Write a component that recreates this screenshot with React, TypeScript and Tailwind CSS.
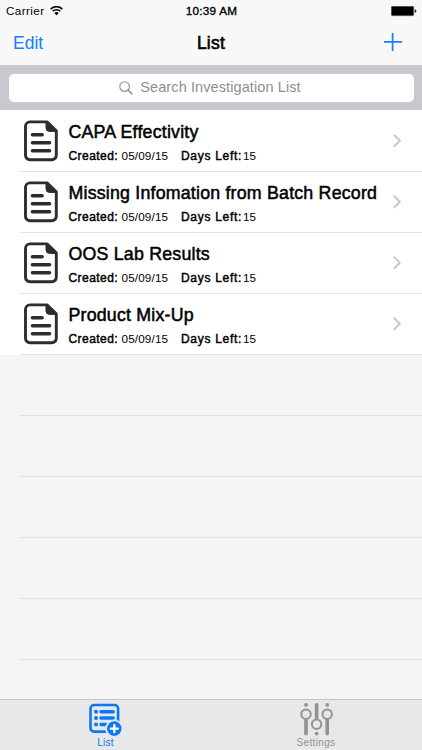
interface Investigation {
  title: string;
  created: string;
  daysLeft: number;
}

const investigations: Investigation[] = [
  { title: "CAPA Effectivity", created: "05/09/15", daysLeft: 15 },
  { title: "Missing Infomation from Batch Record", created: "05/09/15", daysLeft: 15 },
  { title: "OOS Lab Results", created: "05/09/15", daysLeft: 15 },
  { title: "Product Mix-Up", created: "05/09/15", daysLeft: 15 },
];

function WifiIcon() {
  return (
    <svg width="13" height="10" viewBox="0 0 13 10" fill="none" stroke="#000" strokeWidth="1.6">
      <path d="M0.7 3.1a8.2 8.2 0 0 1 11.6 0" />
      <path d="M2.7 5.3a5.4 5.4 0 0 1 7.6 0" />
      <path d="M6.5 9.3L4.3 7a3.1 3.1 0 0 1 4.4 0z" fill="#000" stroke="none" />
    </svg>
  );
}

function BatteryIcon() {
  return (
    <svg width="26" height="11" viewBox="0 0 26 11">
      <rect x="0.25" y="0.25" width="22.5" height="9.5" rx="1.2" fill="#000" stroke="#777" strokeWidth="0.5" />
      <path d="M23.7 3.4h0.6a0.9 0.9 0 0 1 0.9 0.9v1.4a0.9 0.9 0 0 1-0.9 0.9h-0.6z" fill="#222" />
    </svg>
  );
}

function DocumentIcon() {
  return (
    <svg className="shrink-0" width="34" height="42" viewBox="0 0 34 42" fill="none" stroke="#2d2d30">
      <path d="M6 1.9H23L32.3 10.9V35.2a4.5 4.5 0 0 1-4.5 4.5H6a4.5 4.5 0 0 1-4.5-4.5V6.4A4.5 4.5 0 0 1 6 1.9z" strokeWidth="2.9" strokeLinejoin="round" />
      <path d="M22 1.9v6a3.5 3.5 0 0 0 3.5 3.5h7.1z" fill="#2d2d30" strokeWidth="1" />
      <path d="M8.4 14.8h9.8M8.4 22.8h17.2M8.4 30.8h17.2" strokeWidth="3.4" strokeLinecap="round" />
    </svg>
  );
}

function ListTabIcon() {
  return (
    <svg width="34" height="34" viewBox="0 0 34 34" fill="none" stroke="#0b79f6">
      <rect x="1.5" y="2" width="27.6" height="26.6" rx="3.6" strokeWidth="2.6" />
      <path d="M12 8.8h12.2M12 15.1h12.2M12 21.4h5.6" strokeWidth="3.5" strokeLinecap="round" />
      <path d="M7 8.8h0M7 15.1h0M7 21.4h0" strokeWidth="4" strokeLinecap="round" />
      <circle cx="25.3" cy="25.6" r="8.2" fill="#0b79f6" stroke="#e8e8e8" strokeWidth="1.8" />
      <path d="M25.3 22.1v7M21.8 25.6h7" stroke="#fff" strokeWidth="2.4" strokeLinecap="round" />
    </svg>
  );
}

function SettingsTabIcon() {
  return (
    <svg width="34" height="34" viewBox="0 0 34 34" fill="none" stroke="#929292" strokeWidth="3.6" strokeLinecap="round">
      <circle cx="6" cy="11.3" r="4.7" strokeWidth="2" />
      <circle cx="16.6" cy="21.3" r="4.7" strokeWidth="2" />
      <circle cx="27.2" cy="11.3" r="4.7" strokeWidth="2" />
      <path d="M6 17.5v13.2M16.6 1.9v13.2M27.2 17.5v13.2" />
      <path d="M6 1.9h0M16.6 30.6h0M27.2 1.9h0" strokeWidth="3.8" />
    </svg>
  );
}

function InvestigationRow({ item }: { item: Investigation }) {
  return (
    <li className="flex h-[61px] bg-white pl-5">
      <div className="flex flex-1 border-b border-[#e2e2e4] pl-1 pr-5 pt-[9px]">
        <DocumentIcon />
        <div className="ml-[10.5px] flex-1 whitespace-nowrap pt-px">
          <h2 className="text-[17.8px] leading-[23px] tracking-[0.2px] [-webkit-text-stroke:0.5px_#000]">{item.title}</h2>
          <p className="mt-1 flex text-[12px] leading-4">
            <span className="w-[53px] tracking-[0.45px] [-webkit-text-stroke:0.45px_#000]">Created:</span>
            <span className="w-[59.5px] text-[11.7px] tracking-[0.15px]">{item.created}</span>
            <span className="w-[62px] tracking-[0.7px] [-webkit-text-stroke:0.45px_#000]">Days Left:</span>
            <span className="text-[11.7px]">{item.daysLeft}</span>
          </p>
        </div>
        <svg className="mt-[13px]" width="10" height="15" viewBox="0 0 10 15" fill="none" stroke="#c7c7cc" strokeWidth="2">
          <path d="M1.8 1.6l6 6.1-6 6.1" />
        </svg>
      </div>
    </li>
  );
}

export default function App() {
  return (
    <div className="flex h-[750px] w-[422px] flex-col overflow-hidden bg-[#f5f5f5] font-['Liberation_Sans',Arial,sans-serif] text-black">
      <header className="h-[65px] shrink-0 bg-[#f8f8f8]">
        <div className="grid h-[22px] grid-cols-3 items-center pl-[6px] pr-[5px] text-[11.7px]">
          <div className="flex items-center gap-[5px]">
            <span className="tracking-[0.4px]">Carrier</span>
            <WifiIcon />
          </div>
          <span className="text-center tracking-[0.25px] [-webkit-text-stroke:0.35px_#000]">10:39 AM</span>
          <div className="flex justify-end">
            <BatteryIcon />
          </div>
        </div>
        <div className="grid h-[43px] grid-cols-[1fr_auto_1fr] items-center pl-[13px] pr-5">
          <button className="text-left text-[17.5px] text-[#157efb]">Edit</button>
          <h1 className="pl-[7px] text-center text-[17.5px] tracking-[0.25px] [-webkit-text-stroke:0.6px_#000]">List</h1>
          <button className="flex justify-end pb-1">
            <svg width="18" height="18" viewBox="0 0 18 18" stroke="#157efb" strokeWidth="1.7">
              <path d="M8.6 0v18M0 8.9h18" />
            </svg>
          </button>
        </div>
      </header>

      <div className="h-[45px] shrink-0 bg-[#c9c8ce] px-[8.5px] pt-[9px]">
        <div className="flex h-[28px] items-center justify-center gap-[7px] rounded-[5px] bg-white text-[#8e8e93]">
          <svg width="14" height="14" viewBox="0 0 14 14" fill="none" stroke="currentColor" strokeWidth="1.1">
            <circle cx="5.6" cy="5.6" r="4.8" />
            <path d="M9.1 9.1l4.2 4.2" strokeWidth="1.5" />
          </svg>
          <span className="pr-[2px] text-[14.5px] tracking-[0.1px]">Search Investigation List</span>
        </div>
      </div>

      <ul className="flex-1 overflow-hidden">
        <li className="h-px bg-white" />
        {investigations.map((item) => (
          <InvestigationRow key={item.title} item={item} />
        ))}
        {/* Empty rows keep their separators down to the tab bar */}
        {[0, 1, 2, 3, 4].map((row) => (
          <li key={row} className="ml-5 h-[61px] border-b border-[#e2e2e4]" />
        ))}
      </ul>

      <nav className="grid h-[51px] shrink-0 grid-cols-2 border-t border-[#c4c4c4] bg-[#e8e8e8] text-[10px] leading-3">
        <button className="flex flex-col items-center pt-[3px] text-[#0b79f6]">
          <ListTabIcon />
          <span className="tracking-[0.2px]">List</span>
        </button>
        <button className="flex flex-col items-center pt-[3px] text-[#929292]">
          <SettingsTabIcon />
          <span className="pr-px tracking-[0.35px]">Settings</span>
        </button>
      </nav>
    </div>
  );
}
